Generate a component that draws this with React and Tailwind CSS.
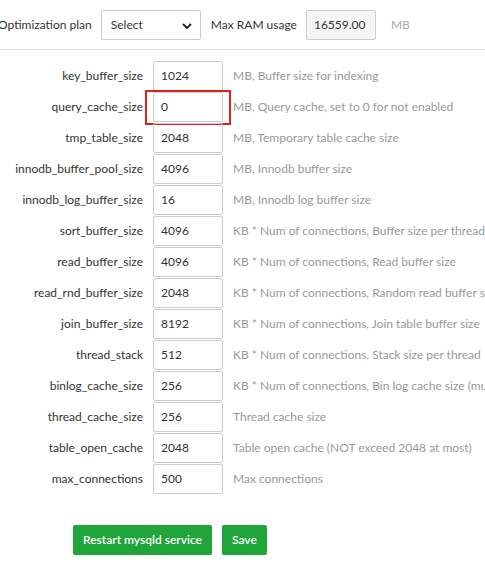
const rows = [
  ['key_buffer_size', '1024', 'MB, Buffer size for indexing'],
  ['query_cache_size', '0', 'MB, Query cache, set to 0 for not enabled'],
  ['tmp_table_size', '2048', 'MB, Temporary table cache size'],
  ['innodb_buffer_pool_size', '4096', 'MB, Innodb buffer size'],
  ['innodb_log_buffer_size', '16', 'MB, Innodb log buffer size'],
  ['sort_buffer_size', '4096', 'KB * Num of connections, Buffer size per thread'],
  ['read_buffer_size', '4096', 'KB * Num of connections, Read buffer size'],
  ['read_rnd_buffer_size', '2048', 'KB * Num of connections, Random read buffer size'],
  ['join_buffer_size', '8192', 'KB * Num of connections, Join table buffer size'],
  ['thread_stack', '512', 'KB * Num of connections, Stack size per thread'],
  ['binlog_cache_size', '256', 'KB * Num of connections, Bin log cache size (multiple of 4096)'],
  ['thread_cache_size', '256', 'Thread cache size'],
  ['table_open_cache', '2048', 'Table open cache (NOT exceed 2048 at most)'],
  ['max_connections', '500', 'Max connections'],
];

export default function App() {
  return (
    <div className="w-[485px] h-[568px] overflow-hidden bg-white text-[12px] text-[#555] whitespace-nowrap" style={{ fontFamily: 'Lato, "Open Sans", sans-serif' }}>
      <div className="flex items-center h-[50px] pt-[1px] -ml-[2px] border-b border-[#ddd]">
        <span className="shrink-0 text-[#333] mr-[9px]">Optimization plan</span>
        <div className="shrink-0 relative w-[100px] h-[30px] border border-[#ccc] rounded-[2px] flex items-center pl-[9px] text-[#333]">
          Select
          <svg className="absolute right-[8px] top-[11px]" width="10" height="8" viewBox="0 0 10 8">
            <path d="M1 2l4 4 4-4" fill="none" stroke="#222" strokeWidth="1.8" />
          </svg>
        </div>
        <span className="shrink-0 text-[#333] ml-[10px] mr-[9px]">Max RAM usage</span>
        <div className="shrink-0 w-[70px] h-[30px] border border-[#ccc] rounded-[2px] bg-[#f5f5f5] flex items-center pl-[7px] text-[#333]">16559.00</div>
        <span className="shrink-0 ml-[15px] text-[#aaa]">MB</span>
      </div>
      <div className="pt-[11px] flex flex-col gap-[1px]">
        {rows.map(([name, val, desc]) => (
          <div key={name} className="flex items-center h-[30px]">
            <div className="shrink-0 w-[143px] text-right text-[#333]">{name}</div>
            <div className="shrink-0 relative ml-[10px]">
              <div className="w-[70px] h-[30px] border border-[#ccc] rounded-[2px] flex items-center pl-[7px] text-[#333]">{val}</div>
              {name === 'query_cache_size' && (
                <div className="absolute -left-[8px] -top-[2px] w-[86px] h-[35px] border-2 border-[#e0201c]" />
              )}
            </div>
            <div className="shrink-0 ml-[10px] text-[#999]">{desc}</div>
          </div>
        ))}
      </div>
      <div className="flex gap-[10px] pl-[73px] pt-[31px]">
        <button className="h-[30px] px-[10px] bg-[#20a53a] text-white rounded-[2px] text-[12px] font-semibold">Restart mysqld service</button>
        <button className="h-[30px] px-[10px] bg-[#20a53a] text-white rounded-[2px] text-[12px] font-semibold">Save</button>
      </div>
    </div>
  );
}
